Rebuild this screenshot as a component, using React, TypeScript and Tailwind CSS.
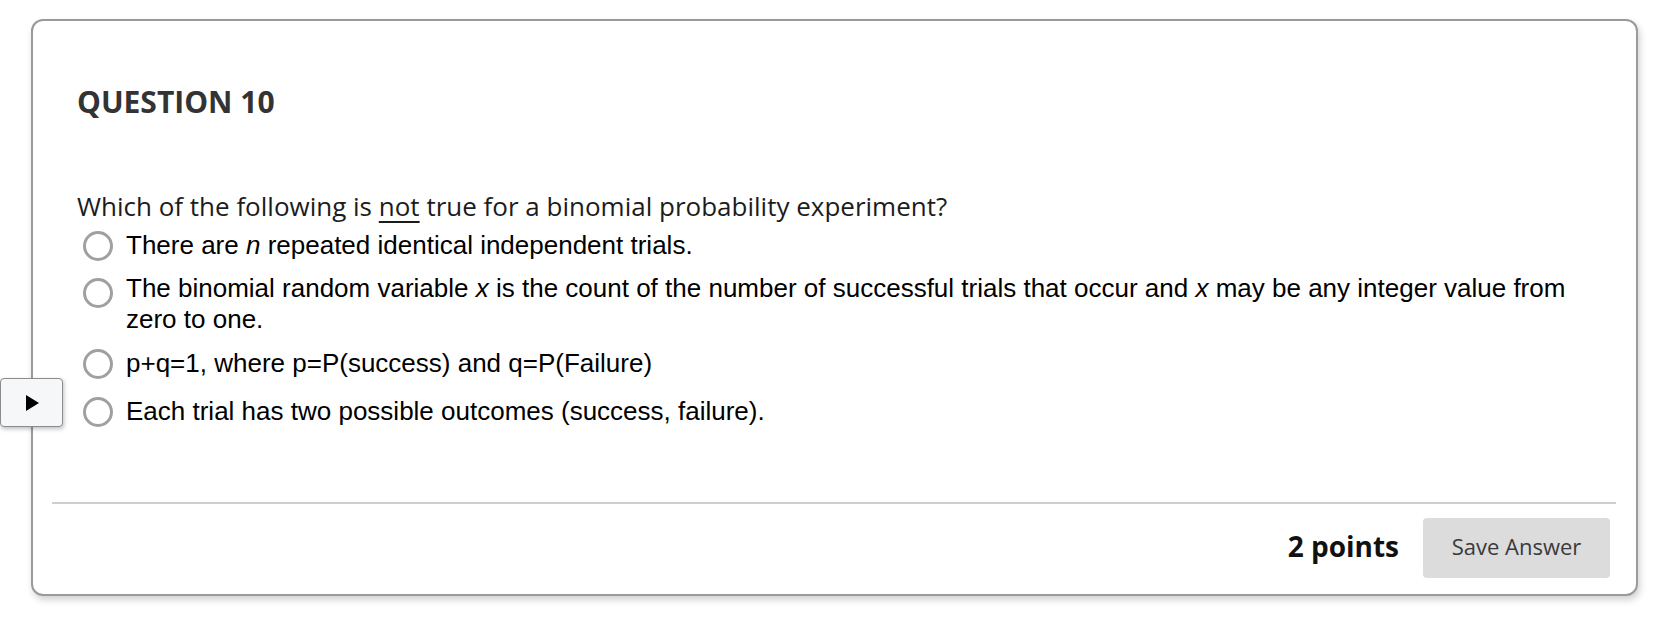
import React from "react";

const Radio = ({ className = "" }: { className?: string }) => (
  <div className={"w-[30px] h-[30px] rounded-full border-[3px] border-[#a0a0a0] bg-white shrink-0 " + className} />
);

export default function App() {
  return (
    <div className="relative w-[1668px] h-[625px] bg-white overflow-hidden">
      <div className="pt-[19px] pl-[31px]">
        <div className="w-[1607px] h-[577px] border-2 border-[#9a9a9a] rounded-[12px] bg-white shadow-[2px_4px_7px_rgba(0,0,0,0.18)] flex flex-col">
          <div className="pl-[44px] pt-[66px]">
            <h2 className="text-[30px] leading-[29px] font-bold text-[#333333] font-['Open_Sans',sans-serif]">
              QUESTION 10
            </h2>
            <p className="mt-[77px] text-[26px] leading-[26px] text-[#1c1c1c] font-['Open_Sans',sans-serif]">
              Which of the following is <span className="underline underline-offset-[5px] decoration-[1.5px]">not</span> true for a binomial probability experiment?
            </p>
            <div className="font-['Liberation_Sans',Arial,sans-serif] text-[26px] leading-[31px] text-black">
              <div className="mt-[11px] flex items-center">
                <Radio className="ml-[6px]" />
                <div className="ml-[13px]">
                  There are <i>n</i> repeated identical independent trials.
                </div>
              </div>
              <div className="mt-[12px] flex items-start">
                <Radio className="ml-[6px] mt-[5px]" />
                <div className="ml-[13px] w-[1470px]">
                  The binomial random variable <i>x</i> is the count of the number of successful trials that occur and <i>x</i> may be any integer value from zero to one.
                </div>
              </div>
              <div className="mt-[13px] flex items-center">
                <Radio className="ml-[6px]" />
                <div className="ml-[13px]">p+q=1, where p=P(success) and q=P(Failure)</div>
              </div>
              <div className="mt-[17px] flex items-center">
                <Radio className="ml-[6px]" />
                <div className="ml-[13px]">Each trial has two possible outcomes (success, failure).</div>
              </div>
            </div>
          </div>
          <div className="mt-[75px] ml-[19px] mr-[20px] h-[2px] bg-[#cfcfcf]" />
          <div className="mt-[14px] flex items-center justify-end pr-[26px]">
            <span className="text-[28px] leading-none font-bold text-[#111111] font-['Open_Sans',sans-serif] mr-[24px] mt-[-4px]">
              2 points
            </span>
            <button className="w-[187px] h-[60px] pb-[3px] rounded-[4px] bg-[#dcdcdc] text-[22px] text-[#3a3a3a] font-['Open_Sans',sans-serif]">
              Save Answer
            </button>
          </div>
        </div>
      </div>
      <div className="absolute left-0 top-[378px] w-[63px] h-[49px] bg-[#f6f7f9] border-[1.5px] border-[#8c8c8c] rounded-[4px] shadow-[1px_2px_4px_rgba(0,0,0,0.25)] flex items-center justify-center">
        <svg width="13" height="16" viewBox="0 0 13 16" className="ml-[1px]">
          <polygon points="0,0 13,8 0,16" fill="#000" />
        </svg>
      </div>
    </div>
  );
}
